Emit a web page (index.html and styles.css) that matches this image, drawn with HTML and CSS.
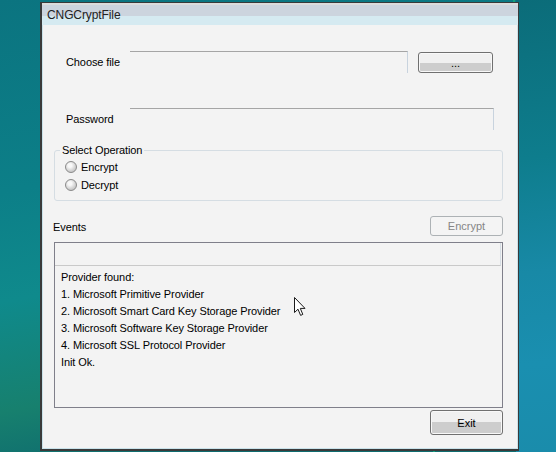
FILE: index.html
```html
<!DOCTYPE html>
<html>
<head>
<meta charset="utf-8">
<title>CNGCryptFile</title>
<link rel="stylesheet" href="styles.css">
</head>
<body>
<div class="desktop">
  <div class="window">
    <div class="titlebar"><span class="title">CNGCryptFile</span></div>
    <div class="client">
      <div class="row row-file">
        <span class="label">Choose file</span>
        <div class="edit edit-file"></div>
        <button class="btn btn-browse"><span>...</span></button>
      </div>
      <div class="row row-pass">
        <span class="label">Password</span>
        <div class="edit edit-pass"></div>
      </div>
      <fieldset class="group">
        <legend>Select Operation</legend>
        <label class="radio"><span class="dot"></span>Encrypt</label>
        <label class="radio"><span class="dot"></span>Decrypt</label>
      </fieldset>
      <div class="row row-events">
        <span class="events-label">Events</span>
        <button class="btn-disabled">Encrypt</button>
      </div>
      <div class="list">
        <div class="list-edit"></div>
        <div class="lines">
          <div>Provider found:</div>
          <div>1. Microsoft Primitive Provider</div>
          <div>2. Microsoft Smart Card Key Storage Provider</div>
          <div>3. Microsoft Software Key Storage Provider</div>
          <div>4. Microsoft SSL Protocol Provider</div>
          <div>Init Ok.</div>
        </div>
      </div>
      <div class="row row-exit">
        <button class="btn btn-exit"><span>Exit</span></button>
      </div>
    </div>
  </div>
  <svg class="cursor" width="13" height="20" viewBox="0 0 13 20">
    <path d="M0.5 0.5 L0.5 15.5 L4 12.2 L6.6 18.4 L8.8 17.4 L6.3 11.4 L11 11.4 Z" fill="#fff" stroke="#1a1a1a" stroke-width="1"/>
  </svg>
</div>
</body>
</html>
```

FILE: styles.css
```css
html, body {
  margin: 0;
  padding: 0;
}
body {
  width: 556px;
  height: 452px;
  overflow: hidden;
  font-family: "Liberation Sans", Arial, sans-serif;
  font-size: 11px;
  letter-spacing: -0.1px;
  color: #000;
}
.desktop {
  position: relative;
  width: 556px;
  height: 452px;
  overflow: hidden;
  background:
    linear-gradient(100deg, transparent 0 505px, #13a07a 505px 507px, transparent 507px),
    linear-gradient(170deg, #0b7480 0%, #0c7f88 35%, #0f8a8c 55%, #17806e 75%, #0e6b6f 88%, #0f6e70 100%);
}
.desktop::after {
  content: "";
  position: absolute;
  right: 0;
  top: 0;
  width: 40px;
  height: 452px;
  background: linear-gradient(172deg, #0b6c79 0%, #0e7d8d 35%, #1889a6 60%, #1a8fb0 80%, #1a8cab 100%);
  z-index: 0;
}
.window {
  position: relative;
  z-index: 1;
  margin: 2px 0 0 40px;
  width: 476px;
  height: 446px;
  border: 1px solid #3a3a3a;
  border-left-width: 2px;
  border-bottom-width: 2px;
  background: #f3f3f3;
  box-shadow: inset 1px 0 0 #c9e2ea, inset -1px 0 0 #c9e2ea, inset 0 -1px 0 #c9e2ea;
  display: flex;
  flex-direction: column;
}
.titlebar {
  height: 22px;
  background: linear-gradient(#dcdcdc 0 2px, #ccd4de 2px 13px, #d5eaf1 13px);
  display: flex;
  align-items: center;
  padding-left: 5px;
}
.title {
  font-size: 12px;
  letter-spacing: -0.1px;
  color: #222;
  margin-top: 2px;
}
.client {
  padding: 26px 0 0 12px;
  display: flex;
  flex-direction: column;
}
.row {
  display: flex;
  align-items: center;
}
.label {
  width: 64px;
  padding-left: 12px;
}
.edit {
  height: 21px;
  border-top: 1px solid #a5a5a5;
  border-right: 1px solid #c8d3de;
}
.edit-file {
  width: 277px;
}
.edit-pass {
  width: 363px;
}
.btn {
  font: inherit;
  letter-spacing: 0;
  padding: 0;
  border: 1px solid #707070;
  border-radius: 3px;
  background: linear-gradient(#f0f0f0 0 50%, #cdcdcd 50%);
  box-shadow: inset 0 0 0 1px #f8f8f8;
  color: #000;
}
.btn-browse {
  width: 75px;
  height: 21px;
  margin-left: 10px;
  margin-top: 1px;
}
.btn-browse span {
  position: relative;
  top: 0;
}
.row-pass {
  margin-top: 35px;
}
.group {
  margin: 14px 0 0 0;
  width: 449px;
  height: 57px;
  box-sizing: border-box;
  border: 1px solid #d5dde3;
  border-radius: 3px;
  padding: 0 0 0 10px;
  display: flex;
  flex-direction: column;
}
.group legend {
  padding: 0 2px;
  margin-left: -5px;
  font-size: 11px;
  line-height: 13px;
}
.radio {
  display: flex;
  align-items: center;
  height: 18px;
  margin-top: 1px;
}
.radio + .radio {
  margin-top: 0;
}
.dot {
  border-radius: 50%;
  border: 1px solid #8a8a8a;
  background: radial-gradient(circle at 40% 35%, #f8f8f8 0 20%, #d6d6d6 55%, #b4b4b4 100%);
  margin-right: 4px;
  box-sizing: border-box;
  width: 12px;
  height: 12px;
}
.row-events {
  margin-top: 15px;
  justify-content: space-between;
  height: 20px;
  width: 449px;
}
.events-label {
  margin-left: -1px;
  margin-top: 1px;
}
.btn-disabled {
  font: inherit;
  letter-spacing: 0;
  width: 73px;
  height: 20px;
  padding: 0;
  border: 1px solid #adb2b5;
  border-radius: 3px;
  background: #f4f4f4;
  color: #858585;
}
.list {
  margin-top: 6px;
  width: 449px;
  height: 166px;
  box-sizing: border-box;
  border: 1px solid #7f7f8a;
  background: #f3f3f3;
}
.list-edit {
  height: 22px;
  margin-right: 1px;
  border-bottom: 1px solid #c9c9c9;
  border-right: 1px solid #d6dde4;
}
.lines {
  padding: 3px 0 0 6px;
  line-height: 17px;
}
.row-exit {
  justify-content: flex-end;
  width: 449px;
  margin-top: 2px;
}
.btn-exit {
  width: 73px;
  height: 25px;
  margin-right: 0;
}
.cursor {
  position: absolute;
  left: 294px;
  top: 297px;
  z-index: 5;
}
```
